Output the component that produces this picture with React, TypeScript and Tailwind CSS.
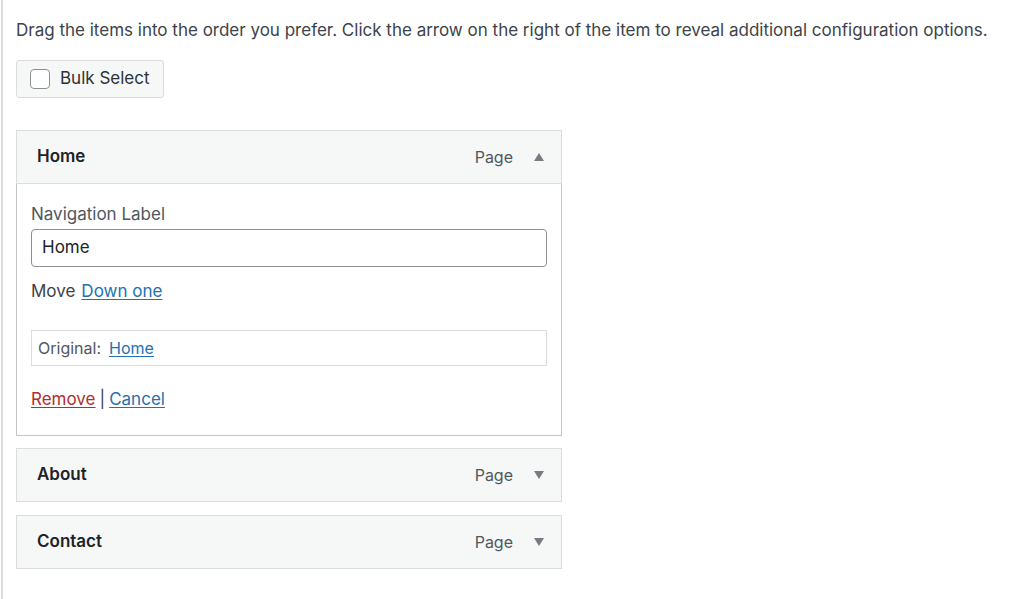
import React from 'react';

const font = { fontFamily: 'Inter, "Liberation Sans", Arial, sans-serif' };

const Arrow = ({ up }: { up?: boolean }) => (
  <svg width="10" height="8" viewBox="0 0 10 8" className="fill-[#787c82]">
    {up ? <path d="M5 0 L10 8 L0 8 Z" /> : <path d="M0 0 L10 0 L5 8 Z" />}
  </svg>
);

const ItemHeader = ({ title, open }: { title: string; open?: boolean }) => (
  <div className="flex h-[54px] items-center justify-between bg-[#f6f7f7] border border-[#dcdcde] pl-[20px] pr-[17px]">
    <span className="text-[17px] font-semibold text-[#1d2327]">{title}</span>
    <div className="flex items-center gap-[21px]">
      <span className="text-[16px] text-[#50575e]">Page</span>
      <Arrow up={open} />
    </div>
  </div>
);

export default function App() {
  return (
    <div className="min-h-[599px] bg-white" style={font}>
      <div className="ml-[1px] min-h-[599px] border-l-2 border-[#dcdcde] pl-[13px] pt-[19px]">
        <p className="text-[17px] leading-[22px] text-[#3c434a]">
          Drag the items into the order you prefer. Click the arrow on the right of the item to reveal additional configuration options.
        </p>

        <button className="mt-[19px] flex h-[38px] w-[148px] items-center gap-[10px] rounded-[3px] border border-[#dcdcde] bg-[#f6f7f7] pl-[13px] text-[17px] text-[#2c3338]">
          <span className="h-[20px] w-[20px] rounded-[4px] border border-[#8c8f94] bg-white" />
          Bulk Select
        </button>

        <div className="mt-[32px] w-[546px]">
          <ItemHeader title="Home" open />
          <div className="border border-t-0 border-[#c3c4c7] px-[14px] pt-[19px] pb-[25px] text-[#3c434a]">
            <label className="block text-[17px] leading-[22px] text-[#50575e]">Navigation Label</label>
            <div className="mt-[4px] flex h-[38px] items-center rounded-[4px] border border-[#8c8f94] px-[10px] text-[17px] text-[#1d2327]">
              Home
            </div>
            <div className="mt-[13px] flex items-center gap-[6px] text-[17px] leading-[22px]">
              <span>Move</span>
              <a className="text-[#2271b1] underline underline-offset-2">Down one</a>
            </div>
            <div className="mt-[28px] flex h-[36px] items-center gap-[8px] border border-[#dcdcde] px-[6px] text-[16px] text-[#50575e]">
              <span>Original:</span>
              <a className="text-[#2271b1] underline underline-offset-2">Home</a>
            </div>
            <div className="mt-[22px] flex items-center gap-[4px] text-[17px] leading-[22px]">
              <a className="text-[#b32d2e] underline underline-offset-2">Remove</a>
              <span>|</span>
              <a className="text-[#2271b1] underline underline-offset-2">Cancel</a>
            </div>
          </div>

          <div className="mt-[12px]">
            <ItemHeader title="About" />
          </div>
          <div className="mt-[13px]">
            <ItemHeader title="Contact" />
          </div>
        </div>
      </div>
    </div>
  );
}
